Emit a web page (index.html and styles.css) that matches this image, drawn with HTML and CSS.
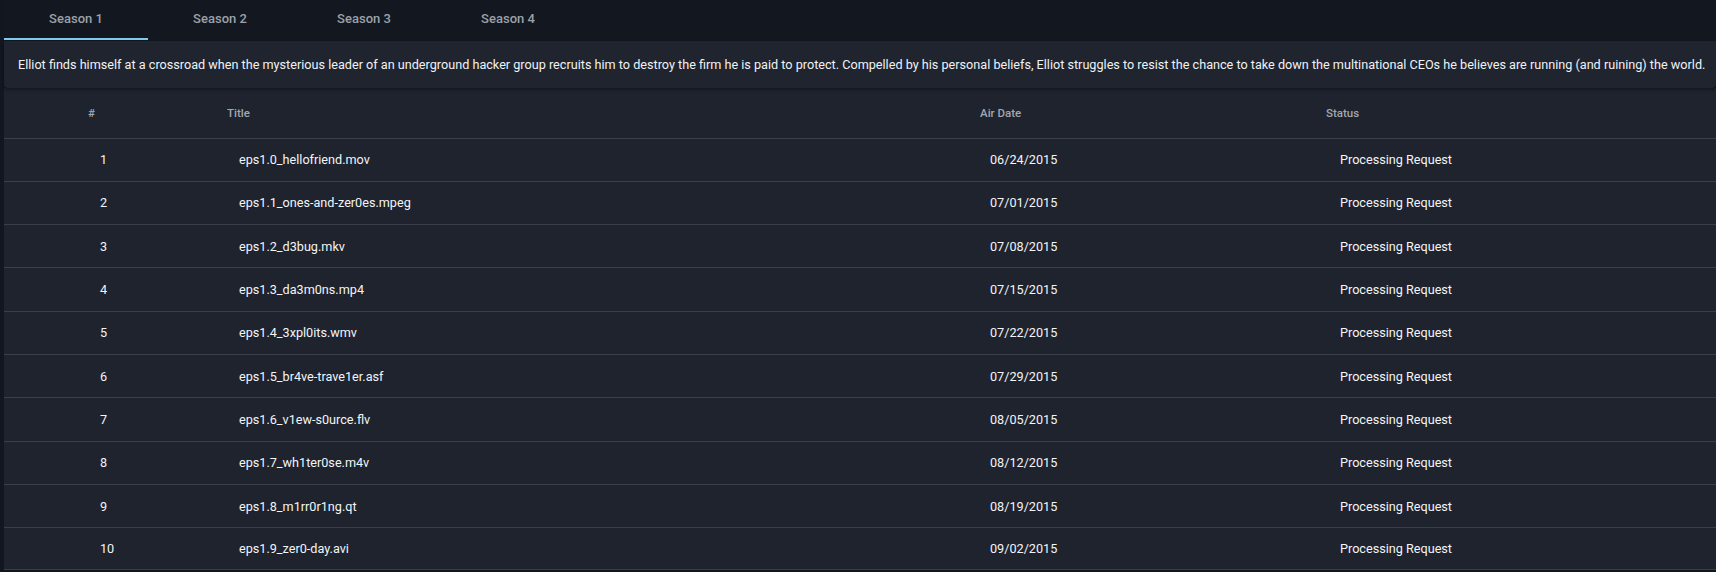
FILE: index.html
```html
<!DOCTYPE html>
<html lang="en">
<head>
    <meta charset="UTF-8">
    <meta name="viewport" content="width=device-width, initial-scale=1.0">
    <title>Seasons</title>
    <link rel="stylesheet" href="styles.css">
</head>
<body>
    <div class="container">
        <div class="tabs">
            <div class="tab tab-active">Season 1</div>
            <div class="tab">Season 2</div>
            <div class="tab">Season 3</div>
            <div class="tab">Season 4</div>
        </div>

        <div class="overview">
            Elliot finds himself at a crossroad when the mysterious leader of an underground hacker group recruits him to destroy the firm he is paid to protect. Compelled by his personal beliefs, Elliot struggles to resist the chance to take down the multinational CEOs he believes are running (and ruining) the world.
        </div>

        <div class="episodes">
            <div class="episode-head">
                <div>#</div>
                <div>Title</div>
                <div>Air Date</div>
                <div>Status</div>
            </div>
            <div class="episode-row"><div>1</div><div>eps1.0_hellofriend.mov</div><div>06/24/2015</div><div>Processing Request</div></div>
            <div class="episode-row"><div>2</div><div>eps1.1_ones-and-zer0es.mpeg</div><div>07/01/2015</div><div>Processing Request</div></div>
            <div class="episode-row"><div>3</div><div>eps1.2_d3bug.mkv</div><div>07/08/2015</div><div>Processing Request</div></div>
            <div class="episode-row"><div>4</div><div>eps1.3_da3m0ns.mp4</div><div>07/15/2015</div><div>Processing Request</div></div>
            <div class="episode-row"><div>5</div><div>eps1.4_3xpl0its.wmv</div><div>07/22/2015</div><div>Processing Request</div></div>
            <div class="episode-row"><div>6</div><div>eps1.5_br4ve-trave1er.asf</div><div>07/29/2015</div><div>Processing Request</div></div>
            <div class="episode-row"><div>7</div><div>eps1.6_v1ew-s0urce.flv</div><div>08/05/2015</div><div>Processing Request</div></div>
            <div class="episode-row"><div>8</div><div>eps1.7_wh1ter0se.m4v</div><div>08/12/2015</div><div>Processing Request</div></div>
            <div class="episode-row"><div>9</div><div>eps1.8_m1rr0r1ng.qt</div><div>08/19/2015</div><div>Processing Request</div></div>
            <div class="episode-row"><div>10</div><div>eps1.9_zer0-day.avi</div><div>09/02/2015</div><div>Processing Request</div></div>
        </div>
    </div>
</body>
</html>
```

FILE: styles.css
```css
body {
    font-family: Roboto, "Liberation Sans", sans-serif;
    font-size: 12.65px;
    color: #f3f5f8;
    background-color: #111620;
    margin: 0;
    overflow: hidden;
}
.container {
    margin-left: 4px;
}
.tabs {
    display: flex;
    height: 40px;
    background-color: #131820;
}
.tab {
    width: 144px;
    box-sizing: border-box;
    text-align: center;
    line-height: 38px;
    font-weight: 500;
    font-size: 13px;
    color: #9ca1a9;
    border-bottom: 2px solid transparent;
}
.tab-active {
    border-bottom-color: #7fc8ee;
}
.overview {
    position: relative;
    margin-top: 1px;
    height: 47px;
    line-height: 47px;
    padding: 0 14px;
    background-color: #1f242e;
    border-radius: 0 0 4px 4px;
    box-shadow: 0 2px 3px rgba(0, 0, 0, 0.35);
    white-space: nowrap;
    color: #f0f2f5;
}
.episodes {
    background-color: #1e232d;
}
.episode-head,
.episode-row {
    display: grid;
    align-items: center;
}
.episode-head {
    grid-template-columns: 139px 753px 346px 1fr;
    height: 49.5px;
    padding-left: 84px;
    font-size: 11.5px;
    font-weight: 500;
    color: #a3a8b1;
}
.episode-row {
    grid-template-columns: 139px 751px 350px 1fr;
    height: 43.3px;
    box-sizing: border-box;
    padding-left: 96px;
    border-top: 1px solid #393e48;
}
.episode-row:last-child {
    border-bottom: 1px solid #393e48;
}
```
